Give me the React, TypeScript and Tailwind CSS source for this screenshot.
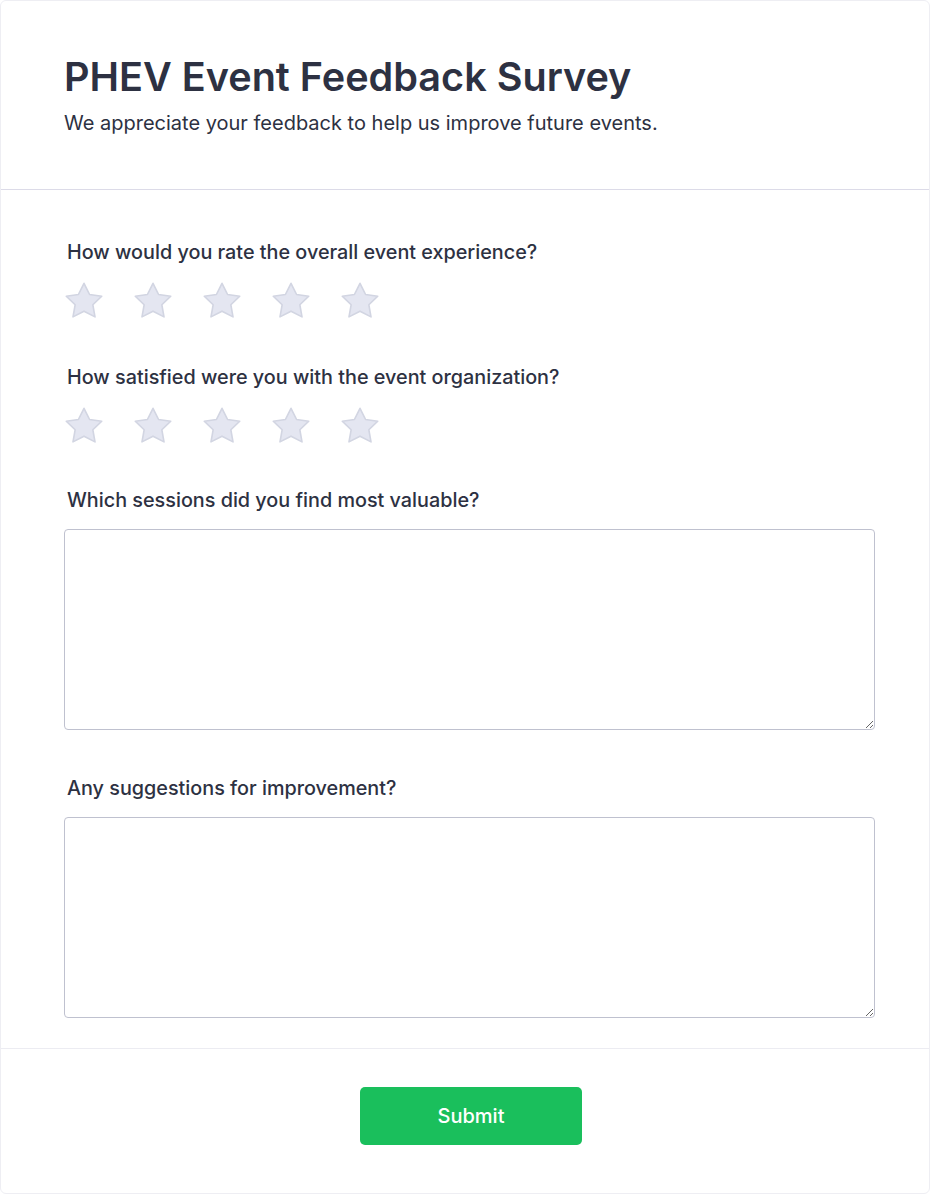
import React from "react"

const questions = [
  { id: "experience", label: "How would you rate the overall event experience?", type: "stars" },
  { id: "organization", label: "How satisfied were you with the event organization?", type: "stars" },
  { id: "sessions", label: "Which sessions did you find most valuable?", type: "text" },
  { id: "suggestions", label: "Any suggestions for improvement?", type: "text" },
]

function Star() {
  return (
    <svg width="40" height="38" viewBox="1 1 22 21" className="block">
      <polygon
        points="12,2.3 15.09,8.46 21.8,9.42 16.9,14.14 18.08,20.82 12,17.67 5.92,20.82 7.1,14.14 2.2,9.42 8.91,8.46"
        fill="#e4e6f1"
        stroke="#d2d5e2"
        strokeWidth="0.9"
        strokeLinejoin="round"
      />
    </svg>
  )
}

function StarRating() {
  return (
    <div className="mt-[15px] flex gap-[29px]">
      {[1, 2, 3, 4, 5].map((n) => (
        <button key={n} type="button" className="cursor-pointer">
          <Star />
        </button>
      ))}
    </div>
  )
}

export default function App() {
  return (
    <div className="min-h-screen bg-white font-['Inter',sans-serif] text-[#2d3142]">
      <div className="min-h-[1194px] rounded-md border border-[#eeeef3]">
        <div className="border-b border-[#dcdbe8] pl-[63px] pr-[54px] pt-14 pb-[52px]">
          <h1 className="text-[39.6px] leading-10 font-semibold">PHEV Event Feedback Survey</h1>
          <p className="mt-3 text-xl leading-7">We appreciate your feedback to help us improve future events.</p>
        </div>

        <div className="flex flex-col pl-[63px] pr-[54px] pt-12 pb-[30px]">
          {questions.map((q, i) => (
            <div key={q.id} className={i === 0 ? "" : i === 2 ? "mt-[42px]" : "mt-[44px]"}>
              <label htmlFor={q.id} className="block pl-[3px] text-[19.8px] leading-7 font-medium">
                {q.label}
              </label>
              {q.type === "stars" ? (
                <StarRating />
              ) : (
                <textarea
                  id={q.id}
                  className="mt-[15px] block h-[201px] w-full rounded-[4px] border border-[#bfc1cf] bg-white p-3 text-base outline-none"
                />
              )}
            </div>
          ))}
        </div>

        <div className="flex justify-center border-t border-[#ececf2] pl-[63px] pr-[51px] pt-[38px] pb-12">
          <button
            type="submit"
            className="h-[58px] w-[222px] rounded-[5px] bg-[#1abf5c] text-xl font-medium text-white"
          >
            Submit
          </button>
        </div>
      </div>
    </div>
  )
}
